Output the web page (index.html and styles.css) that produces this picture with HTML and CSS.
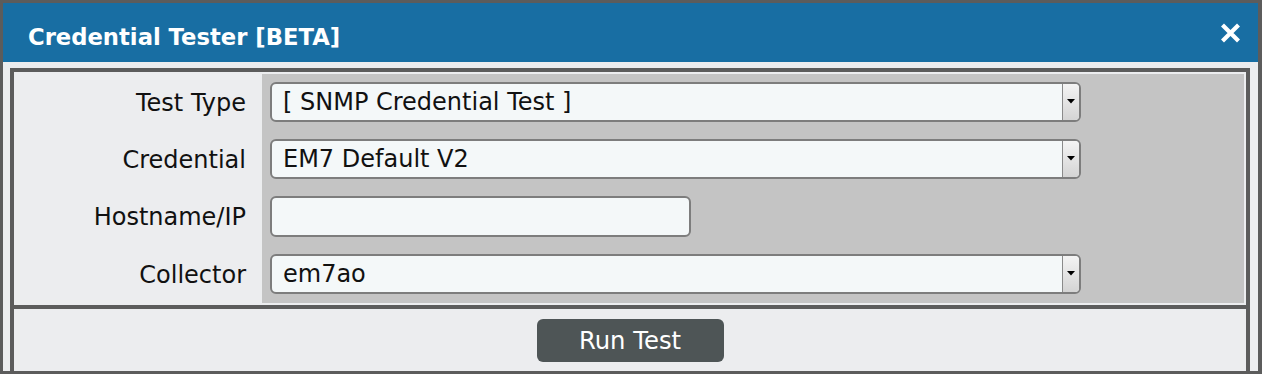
FILE: index.html
```html
<!DOCTYPE html>
<html>
<head>
<meta charset="utf-8">
<link rel="stylesheet" href="styles.css">
</head>
<body>
<div class="modal">
  <div class="titlebar">
    <div class="title">Credential Tester [BETA]</div>
    <svg class="close" width="21" height="20" viewBox="0 0 21 20"><path d="M2.5 2 L18.5 18 M18.5 2 L2.5 18" stroke="#fff" stroke-width="4.2" stroke-linecap="butt"/></svg>
  </div>
  <div class="content">
    <div class="formbox">
      <div class="label">Test Type</div>
      <div class="value">
        <div class="select"><span class="select-text">[ SNMP Credential Test ]</span><span class="select-arrow"><svg width="8" height="5" viewBox="0 0 8 5"><polygon points="0,0 8,0 4,4.5" fill="#000"/></svg></span></div>
      </div>
      <div class="label">Credential</div>
      <div class="value">
        <div class="select"><span class="select-text">EM7 Default V2</span><span class="select-arrow"><svg width="8" height="5" viewBox="0 0 8 5"><polygon points="0,0 8,0 4,4.5" fill="#000"/></svg></span></div>
      </div>
      <div class="label">Hostname/IP</div>
      <div class="value">
        <div class="input"></div>
      </div>
      <div class="label">Collector</div>
      <div class="value">
        <div class="select"><span class="select-text">em7ao</span><span class="select-arrow"><svg width="8" height="5" viewBox="0 0 8 5"><polygon points="0,0 8,0 4,4.5" fill="#000"/></svg></span></div>
      </div>
    </div>
    <div class="btnbar">
      <button class="run">Run Test</button>
    </div>
  </div>
</div>
</body>
</html>
```

FILE: styles.css
```css
html, body {
  margin: 0;
  padding: 0;
  background: #ecedef;
}
body {
  font-family: "DejaVu Sans", Verdana, sans-serif;
  color: #111;
}
.modal {
  box-sizing: border-box;
  width: 1262px;
  height: 374px;
  border: 3px solid #5c5c5c;
  border-right-width: 4px;
  background: #ecedef;
  overflow: hidden;
}
.titlebar {
  height: 59px;
  background: #186ea3;
  display: flex;
  align-items: center;
  justify-content: space-between;
  padding: 0 17px 0 25px;
}
.title {
  color: #fff;
  font-family: "DejaVu Sans", Verdana, sans-serif;
  font-weight: bold;
  font-size: 22.7px;
  padding-top: 8px;
}
.close {
  display: block;
  margin-top: 1px;
}
.content {
  padding: 6px 8px 0 7px;
}
.formbox {
  border: 4px solid #5c5c5c;
  padding: 2px;
  display: grid;
  grid-template-columns: 244px 1fr;
  column-gap: 2px;
}
.label {
  display: flex;
  align-items: center;
  justify-content: flex-end;
  padding-right: 14px;
  font-size: 24px;
  color: #111;
}
.value {
  background: #c4c4c4;
  padding: 8px 0 9px 8px;
}
.select {
  box-sizing: border-box;
  width: 811px;
  height: 40px;
  border: 2px solid #7d7d7d;
  border-radius: 6px;
  background: #f4f8f9;
  display: flex;
  overflow: hidden;
}
.select-text {
  flex: 1;
  display: flex;
  align-items: center;
  padding-left: 11px;
  font-size: 24px;
  color: #111;
}
.select-arrow {
  width: 16px;
  border-left: 1px solid #8a8a8a;
  background: linear-gradient(#f4f4f4, #d4d4d4);
  display: flex;
  align-items: center;
  justify-content: center;
  padding-bottom: 1px;
}
.input {
  box-sizing: border-box;
  width: 421px;
  height: 41px;
  border: 2px solid #7d7d7d;
  border-radius: 6px;
  background: #f4f8f9;
}
.btnbar {
  border-left: 4px solid #5c5c5c;
  border-right: 4px solid #5c5c5c;
  padding: 10px 0 9px;
  display: flex;
  justify-content: center;
}
.run {
  width: 187px;
  height: 43px;
  background: #4e5556;
  border: none;
  border-radius: 6px;
  color: #fff;
  font-family: "DejaVu Sans", Verdana, sans-serif;
  font-size: 24.3px;
  padding: 0;
  margin: 0;
}
```
